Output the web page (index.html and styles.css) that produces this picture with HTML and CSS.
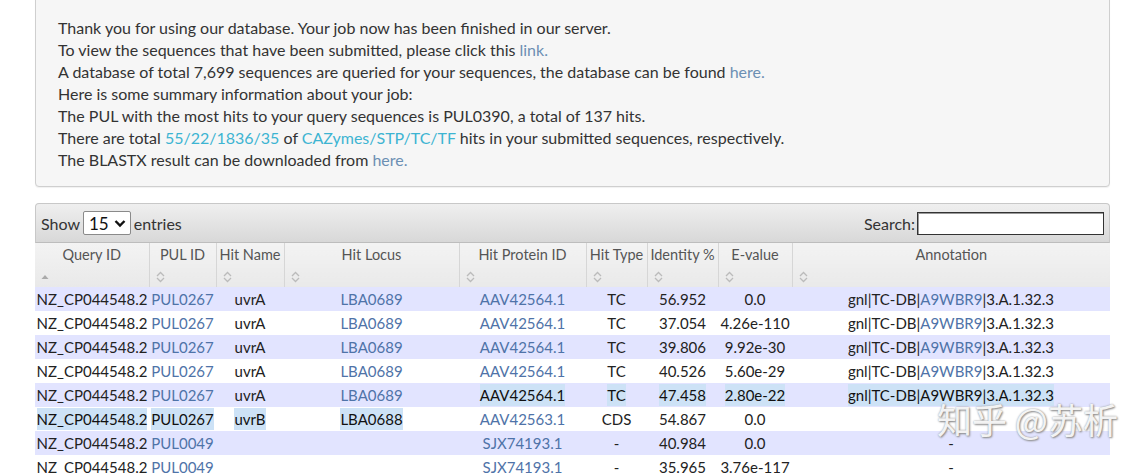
FILE: index.html
```html
<!DOCTYPE html>
<html>
<head>
<meta charset="utf-8">
<link rel="stylesheet" href="styles.css">
</head>
<body>
<div class="page">
  <div class="info">
    <p>Thank you for using our database. Your job now has been finished in our server.</p>
    <p>To view the sequences that have been submitted, please click this <a class="lnk">link.</a></p>
    <p>A database of total 7,699 sequences are queried for your sequences, the database can be found <a class="lnk">here.</a></p>
    <p>Here is some summary information about your job:</p>
    <p>The PUL with the most hits to your query sequences is PUL0390, a total of 137 hits.</p>
    <p>There are total <a class="cy">55/22/1836/35</a> of <a class="cy">CAZymes/STP/TC/TF</a> hits in your submitted sequences, respectively.</p>
    <p>The BLASTX result can be downloaded from <a class="lnk">here.</a></p>
  </div>

  <div class="dt">
    <div class="bar">
      <div class="len">Show <span class="sel-box">15 <svg width="12" height="9" viewBox="0 0 12 9"><path d="M1.5 2 L6 6.5 L10.5 2" fill="none" stroke="#111" stroke-width="2.4"/></svg></span> entries</div>
      <div class="search">Search: <span class="inp"></span></div>
    </div>
    <table>
      <colgroup>
        <col style="width:114px"><col style="width:67px"><col style="width:68px"><col style="width:175px"><col style="width:127px"><col style="width:61px"><col style="width:71px"><col style="width:74px"><col style="width:318px">
      </colgroup>
      <thead>
        <tr>
          <th><div class="t">Query ID</div><div class="s"><svg width="8" height="6" viewBox="0 0 8 6"><path d="M0.5 5 L4 1 L7.5 5Z" fill="#aaa"/></svg></div></th>
          <th><div class="t">PUL ID</div><div class="s"><svg class="both" width="9" height="12" viewBox="0 0 9 12"><path d="M1 5 L4.5 1.5 L8 5 M1 7 L4.5 10.5 L8 7" fill="none" stroke="#bbb" stroke-width="1.3"/></svg></div></th>
          <th><div class="t">Hit Name</div><div class="s"><svg class="both" width="9" height="12" viewBox="0 0 9 12"><path d="M1 5 L4.5 1.5 L8 5 M1 7 L4.5 10.5 L8 7" fill="none" stroke="#bbb" stroke-width="1.3"/></svg></div></th>
          <th><div class="t">Hit Locus</div><div class="s"><svg class="both" width="9" height="12" viewBox="0 0 9 12"><path d="M1 5 L4.5 1.5 L8 5 M1 7 L4.5 10.5 L8 7" fill="none" stroke="#bbb" stroke-width="1.3"/></svg></div></th>
          <th><div class="t">Hit Protein ID</div><div class="s"><svg class="both" width="9" height="12" viewBox="0 0 9 12"><path d="M1 5 L4.5 1.5 L8 5 M1 7 L4.5 10.5 L8 7" fill="none" stroke="#bbb" stroke-width="1.3"/></svg></div></th>
          <th><div class="t">Hit Type</div><div class="s"><svg class="both" width="9" height="12" viewBox="0 0 9 12"><path d="M1 5 L4.5 1.5 L8 5 M1 7 L4.5 10.5 L8 7" fill="none" stroke="#bbb" stroke-width="1.3"/></svg></div></th>
          <th><div class="t">Identity %</div><div class="s"><svg class="both" width="9" height="12" viewBox="0 0 9 12"><path d="M1 5 L4.5 1.5 L8 5 M1 7 L4.5 10.5 L8 7" fill="none" stroke="#bbb" stroke-width="1.3"/></svg></div></th>
          <th><div class="t">E-value</div><div class="s"><svg class="both" width="9" height="12" viewBox="0 0 9 12"><path d="M1 5 L4.5 1.5 L8 5 M1 7 L4.5 10.5 L8 7" fill="none" stroke="#bbb" stroke-width="1.3"/></svg></div></th>
          <th><div class="t">Annotation</div><div class="s"><svg class="both" width="9" height="12" viewBox="0 0 9 12"><path d="M1 5 L4.5 1.5 L8 5 M1 7 L4.5 10.5 L8 7" fill="none" stroke="#bbb" stroke-width="1.3"/></svg></div></th>
        </tr>
      </thead>
      <tbody>
        <tr class="odd"><td>NZ_CP044548.2</td><td><a class="l">PUL0267</a></td><td>uvrA</td><td><a class="l">LBA0689</a></td><td><a class="l">AAV42564.1</a></td><td>TC</td><td>56.952</td><td>0.0</td><td>gnl|TC-DB|<a class="l">A9WBR9</a>|3.A.1.32.3</td></tr>
        <tr><td>NZ_CP044548.2</td><td><a class="l">PUL0267</a></td><td>uvrA</td><td><a class="l">LBA0689</a></td><td><a class="l">AAV42564.1</a></td><td>TC</td><td>37.054</td><td>4.26e-110</td><td>gnl|TC-DB|<a class="l">A9WBR9</a>|3.A.1.32.3</td></tr>
        <tr class="odd"><td>NZ_CP044548.2</td><td><a class="l">PUL0267</a></td><td>uvrA</td><td><a class="l">LBA0689</a></td><td><a class="l">AAV42564.1</a></td><td>TC</td><td>39.806</td><td>9.92e-30</td><td>gnl|TC-DB|<a class="l">A9WBR9</a>|3.A.1.32.3</td></tr>
        <tr><td>NZ_CP044548.2</td><td><a class="l">PUL0267</a></td><td>uvrA</td><td><a class="l">LBA0689</a></td><td><a class="l">AAV42564.1</a></td><td>TC</td><td>40.526</td><td>5.60e-29</td><td>gnl|TC-DB|<a class="l">A9WBR9</a>|3.A.1.32.3</td></tr>
        <tr class="odd"><td>NZ_CP044548.2</td><td><a class="l">PUL0267</a></td><td>uvrA</td><td><a class="l">LBA0689</a></td><td><span class="hl">AAV42564.1</span></td><td><span class="hl">TC</span></td><td><span class="hl">47.458</span></td><td><span class="hl">2.80e-22</span></td><td><span class="hl">gnl|TC-DB|A9WBR9|3.A.1.32.3</span></td></tr>
        <tr><td><span class="hl">NZ_CP044548.2</span></td><td><span class="hl">PUL0267</span></td><td><span class="hl">uvrB</span></td><td><span class="hl">LBA0688</span></td><td><a class="l">AAV42563.1</a></td><td>CDS</td><td>54.867</td><td>0.0</td><td>-</td></tr>
        <tr class="odd"><td>NZ_CP044548.2</td><td><a class="l">PUL0049</a></td><td></td><td></td><td><a class="l">SJX74193.1</a></td><td>-</td><td>40.984</td><td>0.0</td><td>-</td></tr>
        <tr><td>NZ_CP044548.2</td><td><a class="l">PUL0049</a></td><td></td><td></td><td><a class="l">SJX74193.1</a></td><td>-</td><td>35.965</td><td>3.76e-117</td><td>-</td></tr>
      </tbody>
    </table>
    <div class="wm">知乎 @苏析</div>
  </div>
</div>
</body>
</html>
```

FILE: styles.css
```css
html, body {
  margin: 0;
  padding: 0;
  background: #fff;
}
body {
  font-family: Lato, "Noto Sans CJK SC", sans-serif;
  color: #333;
  overflow: hidden;
}
.page {
  width: 1075px;
  margin-left: 35px;
}
.info {
  margin-top: -20px;
  background: #f6f6f6;
  border: 1px solid #cfcfcf;
  border-radius: 4px;
  box-shadow: 0 1px 1px rgba(0,0,0,0.06);
  padding: 36px 20px 15px 22px;
  font-size: 16px;
  line-height: 22px;
}
.info p {
  margin: 0;
}
.lnk { color: #6c8fb3; }
.cy { color: #3db4d2; }

.dt {
  position: relative;
  margin-top: 16px;
}
.bar {
  height: 38px;
  border: 1px solid #c8c8c8;
  border-bottom: 1px solid #bdbdbd;
  border-radius: 4px 4px 0 0;
  background: linear-gradient(#efefef, #d8d8d8);
  display: flex;
  align-items: center;
  justify-content: space-between;
  padding: 0 5px 0 5px;
  font-size: 16px;
  color: #333;
}
.len {
  display: flex;
  align-items: center;
  gap: 3px;
}
.sel-box {
  display: inline-flex;
  align-items: center;
  gap: 5px;
  height: 22px;
  padding: 0 4px 0 5px;
  background: #fff;
  border: 1px solid #8a8a8a;
  border-radius: 2px;
  color: #111;
  font-size: 17px;
}
.search {
  display: flex;
  align-items: center;
  gap: 2px;
}
.inp {
  display: inline-block;
  width: 185px;
  height: 21px;
  background: #fff;
  border: 1px solid #333;
  box-shadow: inset 1px 1px 0 #999;
}

table {
  border-collapse: collapse;
  table-layout: fixed;
  width: 1075px;
}
th {
  padding: 0;
  font-weight: normal;
  color: #555;
  font-size: 14.5px;
  background: linear-gradient(#f3f3f3, #e9e9e9);
  border-left: 1px solid #d6d6d6;
  vertical-align: top;
  height: 44px;
}
th:first-child { border-left: none; }
th .t {
  height: 23px;
  line-height: 24px;
  text-align: center;
  white-space: nowrap;
}
th .s {
  height: 21px;
  text-align: left;
  padding-left: 6px;
  display: flex;
  align-items: center;
}
td {
  height: 24px;
  padding: 0;
  text-align: center;
  font-size: 15px;
  color: #222;
  white-space: nowrap;
  line-height: 24px;
}
tr.odd td { background: #e2e4ff; }
.l { color: #4f73a8; }
.hl { background: #cde2f6; color: #111; padding: 2px 0; }

.wm {
  position: absolute;
  left: 902px;
  top: 190px;
  font-size: 35px;
  color: rgba(255,255,255,0.9);
  text-shadow: 0 0 2px #999, 1px 1px 2px #888;
  white-space: nowrap;
  font-family: "Noto Sans CJK SC", sans-serif;
  pointer-events: none;
}
```
